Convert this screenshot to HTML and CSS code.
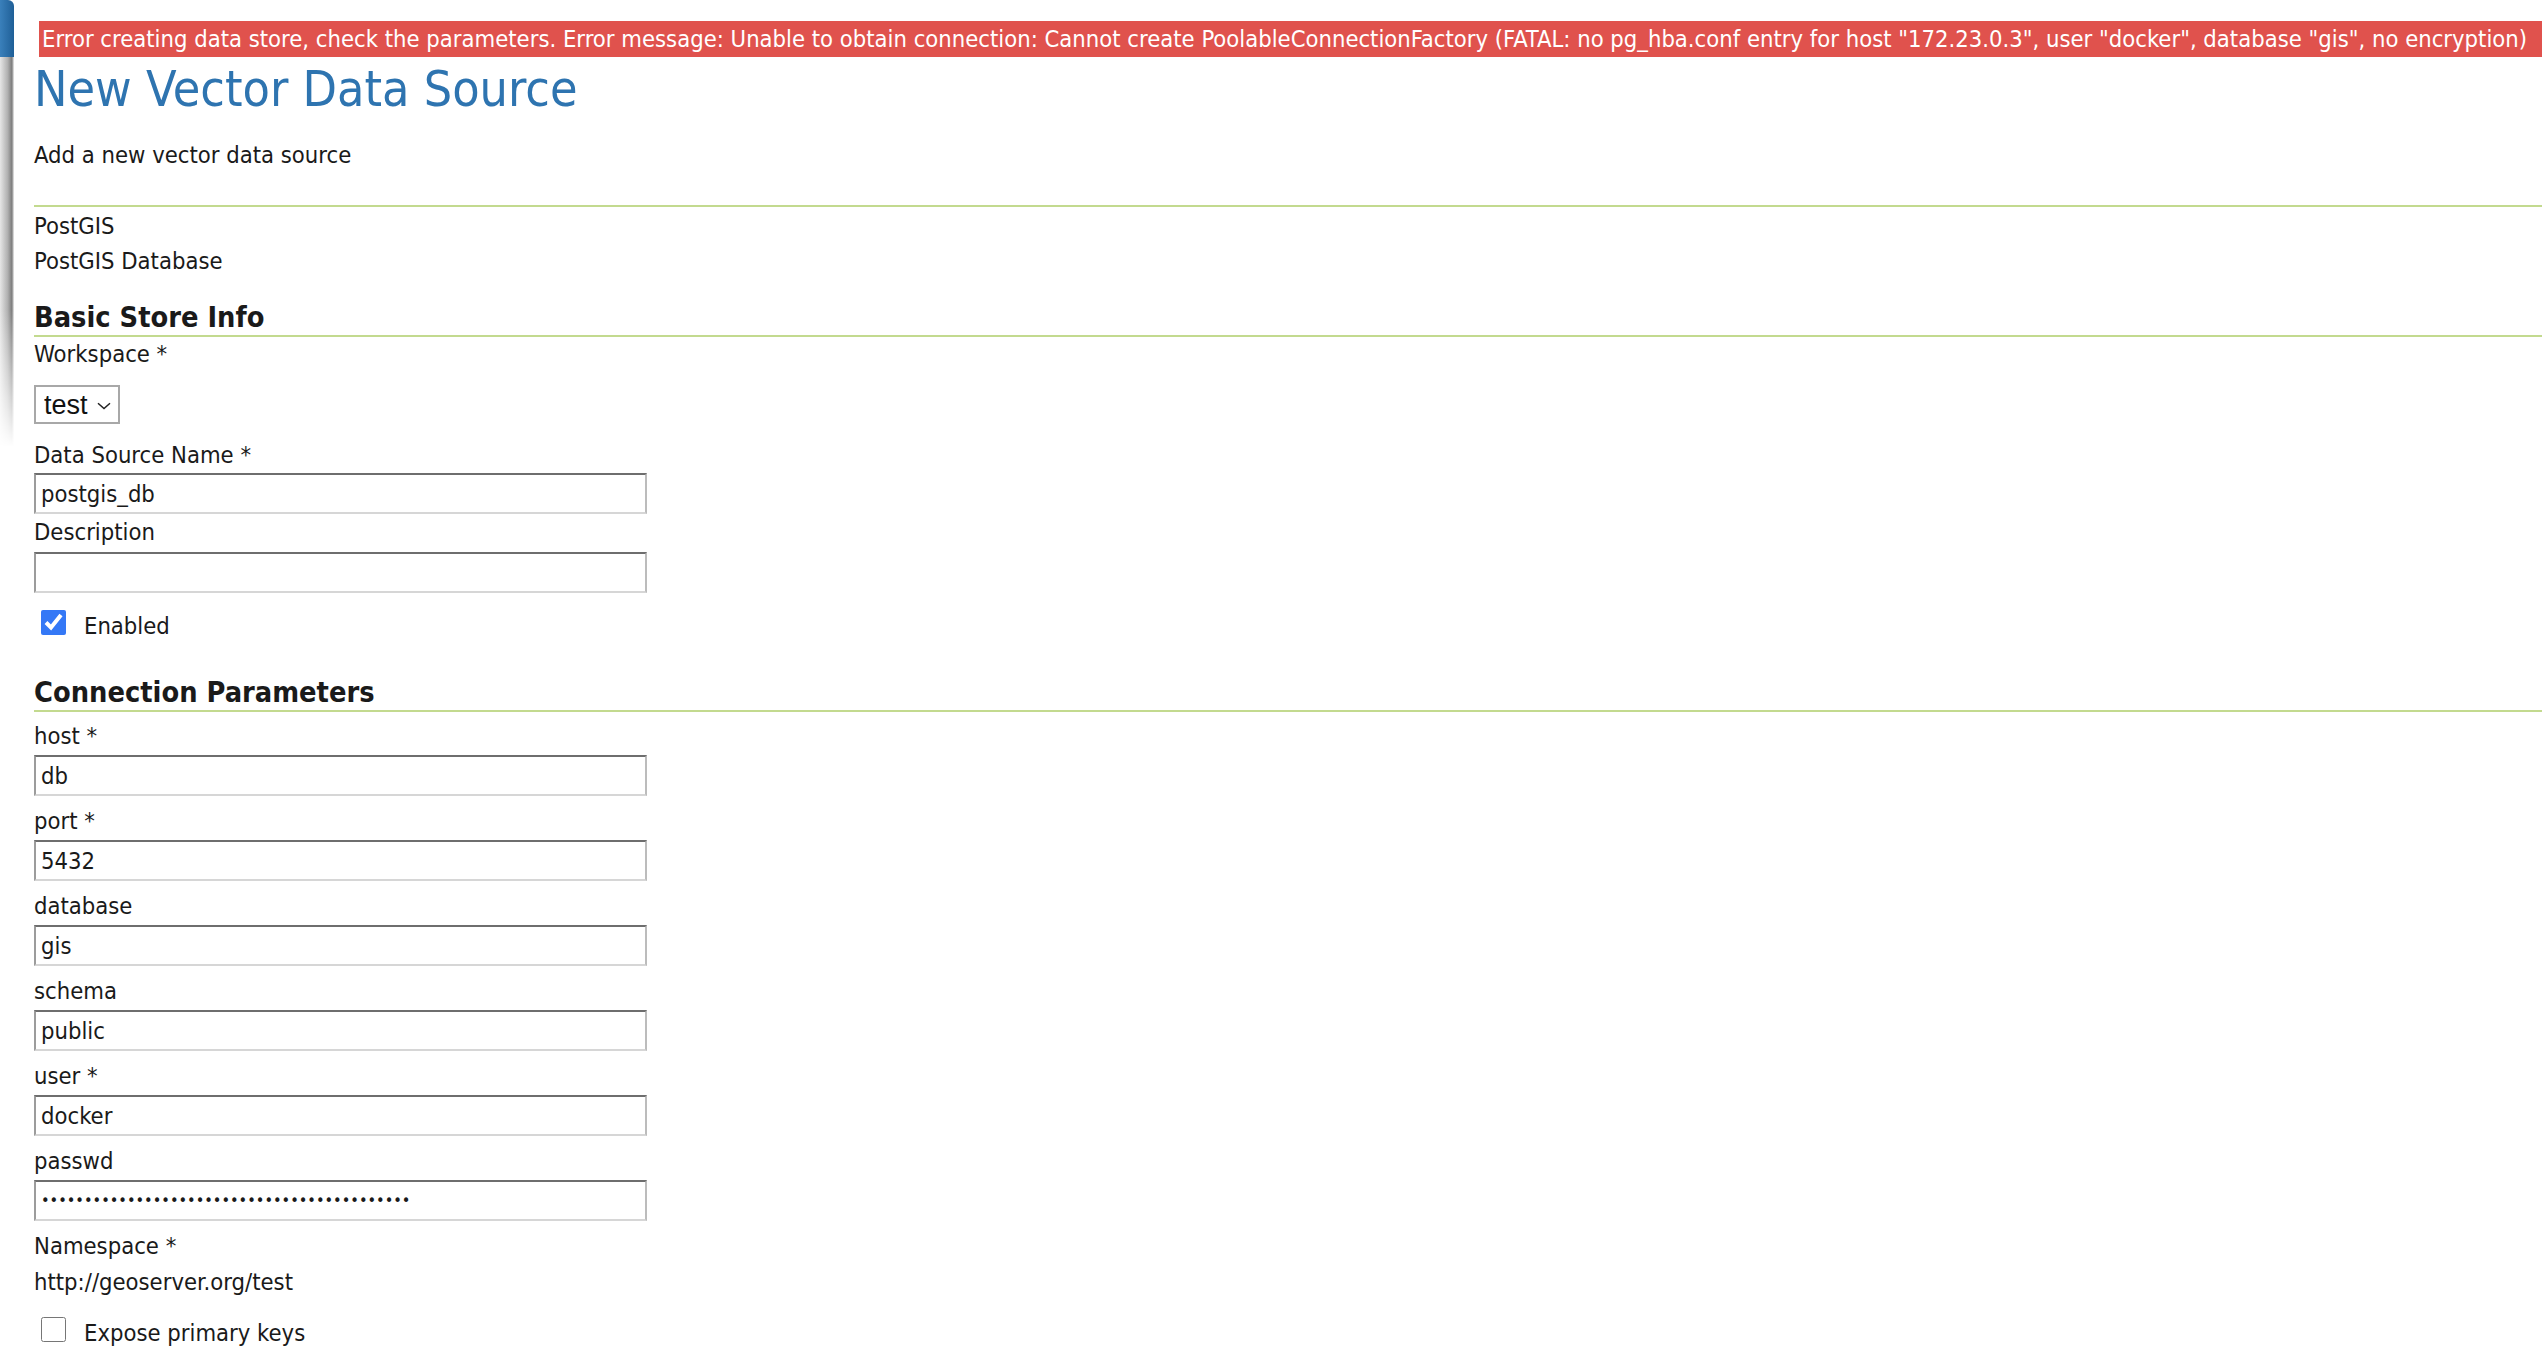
FILE: index.html
```html
<!DOCTYPE html>
<html lang="en">
<head>
<meta charset="UTF-8">
<meta name="viewport" content="width=device-width, initial-scale=1.0">
<title>New Vector Data Source</title>
<link rel="stylesheet" href="styles.css">
</head>
<body>
<div class="shell">
    <div class="edge">
        <div class="edge-top"></div>
        <div class="edge-shadow"></div>
    </div>
    <div class="page">
        <div class="feedback">Error creating data store, check the parameters. Error message: Unable to obtain connection: Cannot create PoolableConnectionFactory (FATAL: no pg_hba.conf entry for host "172.23.0.3", user "docker", database "gis", no encryption)</div>
        <h1 class="title">New Vector Data Source</h1>
        <p class="subtitle">Add a new vector data source</p>

        <div class="store-type">
            <div class="line">PostGIS</div>
            <div class="line">PostGIS Database</div>
        </div>

        <form class="store-form">
            <h3 class="section first">Basic Store Info</h3>
            <label class="label ws-label">Workspace *</label>
            <div class="select-wrap">
                <select class="select">
                    <option>test</option>
                </select>
                <svg class="chevron" width="14" height="8" viewBox="0 0 14 8"><path d="M1 1.2 L7 6.6 L13 1.2" fill="none" stroke="#222" stroke-width="1.5"/></svg>
            </div>

            <label class="label basic">Data Source Name *</label>
            <input class="field" type="text" value="postgis_db">
            <label class="label basic desc">Description</label>
            <input class="field" type="text" value="">

            <div class="check-row enabled">
                <input type="checkbox" class="check" checked>
                <span class="check-label">Enabled</span>
            </div>

            <h3 class="section">Connection Parameters</h3>
            <label class="label param first-param">host *</label>
            <input class="field" type="text" value="db">
            <label class="label param">port *</label>
            <input class="field" type="text" value="5432">
            <label class="label param">database</label>
            <input class="field" type="text" value="gis">
            <label class="label param">schema</label>
            <input class="field" type="text" value="public">
            <label class="label param">user *</label>
            <input class="field" type="text" value="docker">
            <label class="label param">passwd</label>
            <input class="field password" type="password" value="xxxxxxxxxxxxxxxxxxxxxxxxxxxxxxxxxxxxxxxxxxx">

            <label class="label param">Namespace *</label>
            <div class="namespace">http://geoserver.org/test</div>

            <div class="check-row keys">
                <input type="checkbox" class="check">
                <span class="check-label">Expose primary keys</span>
            </div>
        </form>
    </div>
</div>
</body>
</html>
```

FILE: styles.css
```css
body {
    margin: 0;
    background: #fff;
    color: #1a1a1a;
    font-family: "DejaVu Sans", sans-serif;
    font-stretch: condensed;
    font-size: 23.6px;
}
.shell {
    display: flex;
    min-height: 100vh;
}
.edge {
    width: 14px;
    flex-shrink: 0;
}
.edge-top {
    height: 57px;
    background: linear-gradient(to right, #3a80bb, #1f5f97);
    border-top-right-radius: 6px;
}
.edge-shadow {
    height: 390px;
    background: linear-gradient(to right, #e6e6e6, #b0b0b0 55%, #7c7c7c 85%, #f0f0f0);
    -webkit-mask-image: linear-gradient(to bottom, #000 65%, transparent);
    mask-image: linear-gradient(to bottom, #000 65%, transparent);
}
.page {
    flex: 1;
    min-width: 0;
    padding-left: 20px;
    padding-top: 21px;
}
.feedback {
    margin-left: 5px;
    padding-left: 3px;
    height: 36px;
    line-height: 36px;
    background: #e0524d;
    color: #fff;
    white-space: nowrap;
    overflow: hidden;
}
.title {
    margin: 2px 0 0;
    font-size: 49.8px;
    line-height: 60px;
    font-weight: normal;
    color: #2e74b0;
}
.subtitle {
    margin: 21px 0 0;
    line-height: 30px;
}
.store-type {
    margin-top: 35px;
    padding-top: 2px;
    border-top: 2px solid #c3da8f;
}
.line {
    line-height: 35px;
}
.store-form {
    margin: 0;
}
.section {
    margin: 34px 0 0;
    padding-bottom: 1px;
    font-size: 28.7px;
    line-height: 34px;
    font-weight: bold;
    border-bottom: 2px solid #c3da8f;
}
.section.first {
    margin-top: 21px;
}
.label {
    display: block;
    line-height: 30px;
}
.ws-label {
    margin-top: 2px;
}
.select-wrap {
    position: relative;
    width: 86px;
    margin-top: 16px;
}
.select {
    -webkit-appearance: none;
    appearance: none;
    display: block;
    width: 86px;
    height: 39px;
    margin: 0;
    padding: 0 0 0 8px;
    border: 2px solid #a8a8a8;
    border-radius: 0;
    background: #fff;
    color: #111;
    font-family: "Liberation Sans", Arial, sans-serif;
    font-size: 27px;
}
.chevron {
    position: absolute;
    left: 63px;
    top: 17px;
    pointer-events: none;
}
.label.basic {
    margin-top: 16px;
}
.label.desc {
    margin-top: 3px;
}
.field {
    display: block;
    box-sizing: border-box;
    width: 613px;
    height: 41px;
    margin: 3px 0 0;
    padding: 0 5px;
    border-style: solid;
    border-width: 2px;
    border-color: #6e6e6e #bcbcbc #d6d6d6 #9c9c9c;
    border-radius: 0;
    background: #fff;
    color: #1a1a1a;
    font-family: "DejaVu Sans", sans-serif;
    font-stretch: condensed;
    font-size: 23.6px;
    outline: none;
}
.label.desc + .field {
    margin-top: 5px;
}
.label.param {
    margin-top: 10px;
}
.label.param.first-param {
    margin-top: 9px;
}
.label.param + .field {
    margin-top: 4px;
}
.password {
    font-size: 16.2px;
}
.check-row {
    display: flex;
    align-items: flex-start;
}
.check-row.enabled {
    margin-top: 14px;
}
.check-row.keys {
    margin-top: 17px;
}
.check {
    width: 25px;
    height: 25px;
    margin: 3px 0 0 7px;
    accent-color: #3478f6;
}
.check-label {
    margin: 4px 0 0 18px;
    line-height: 30px;
}
.namespace {
    margin-top: 6px;
    line-height: 30px;
}
```
